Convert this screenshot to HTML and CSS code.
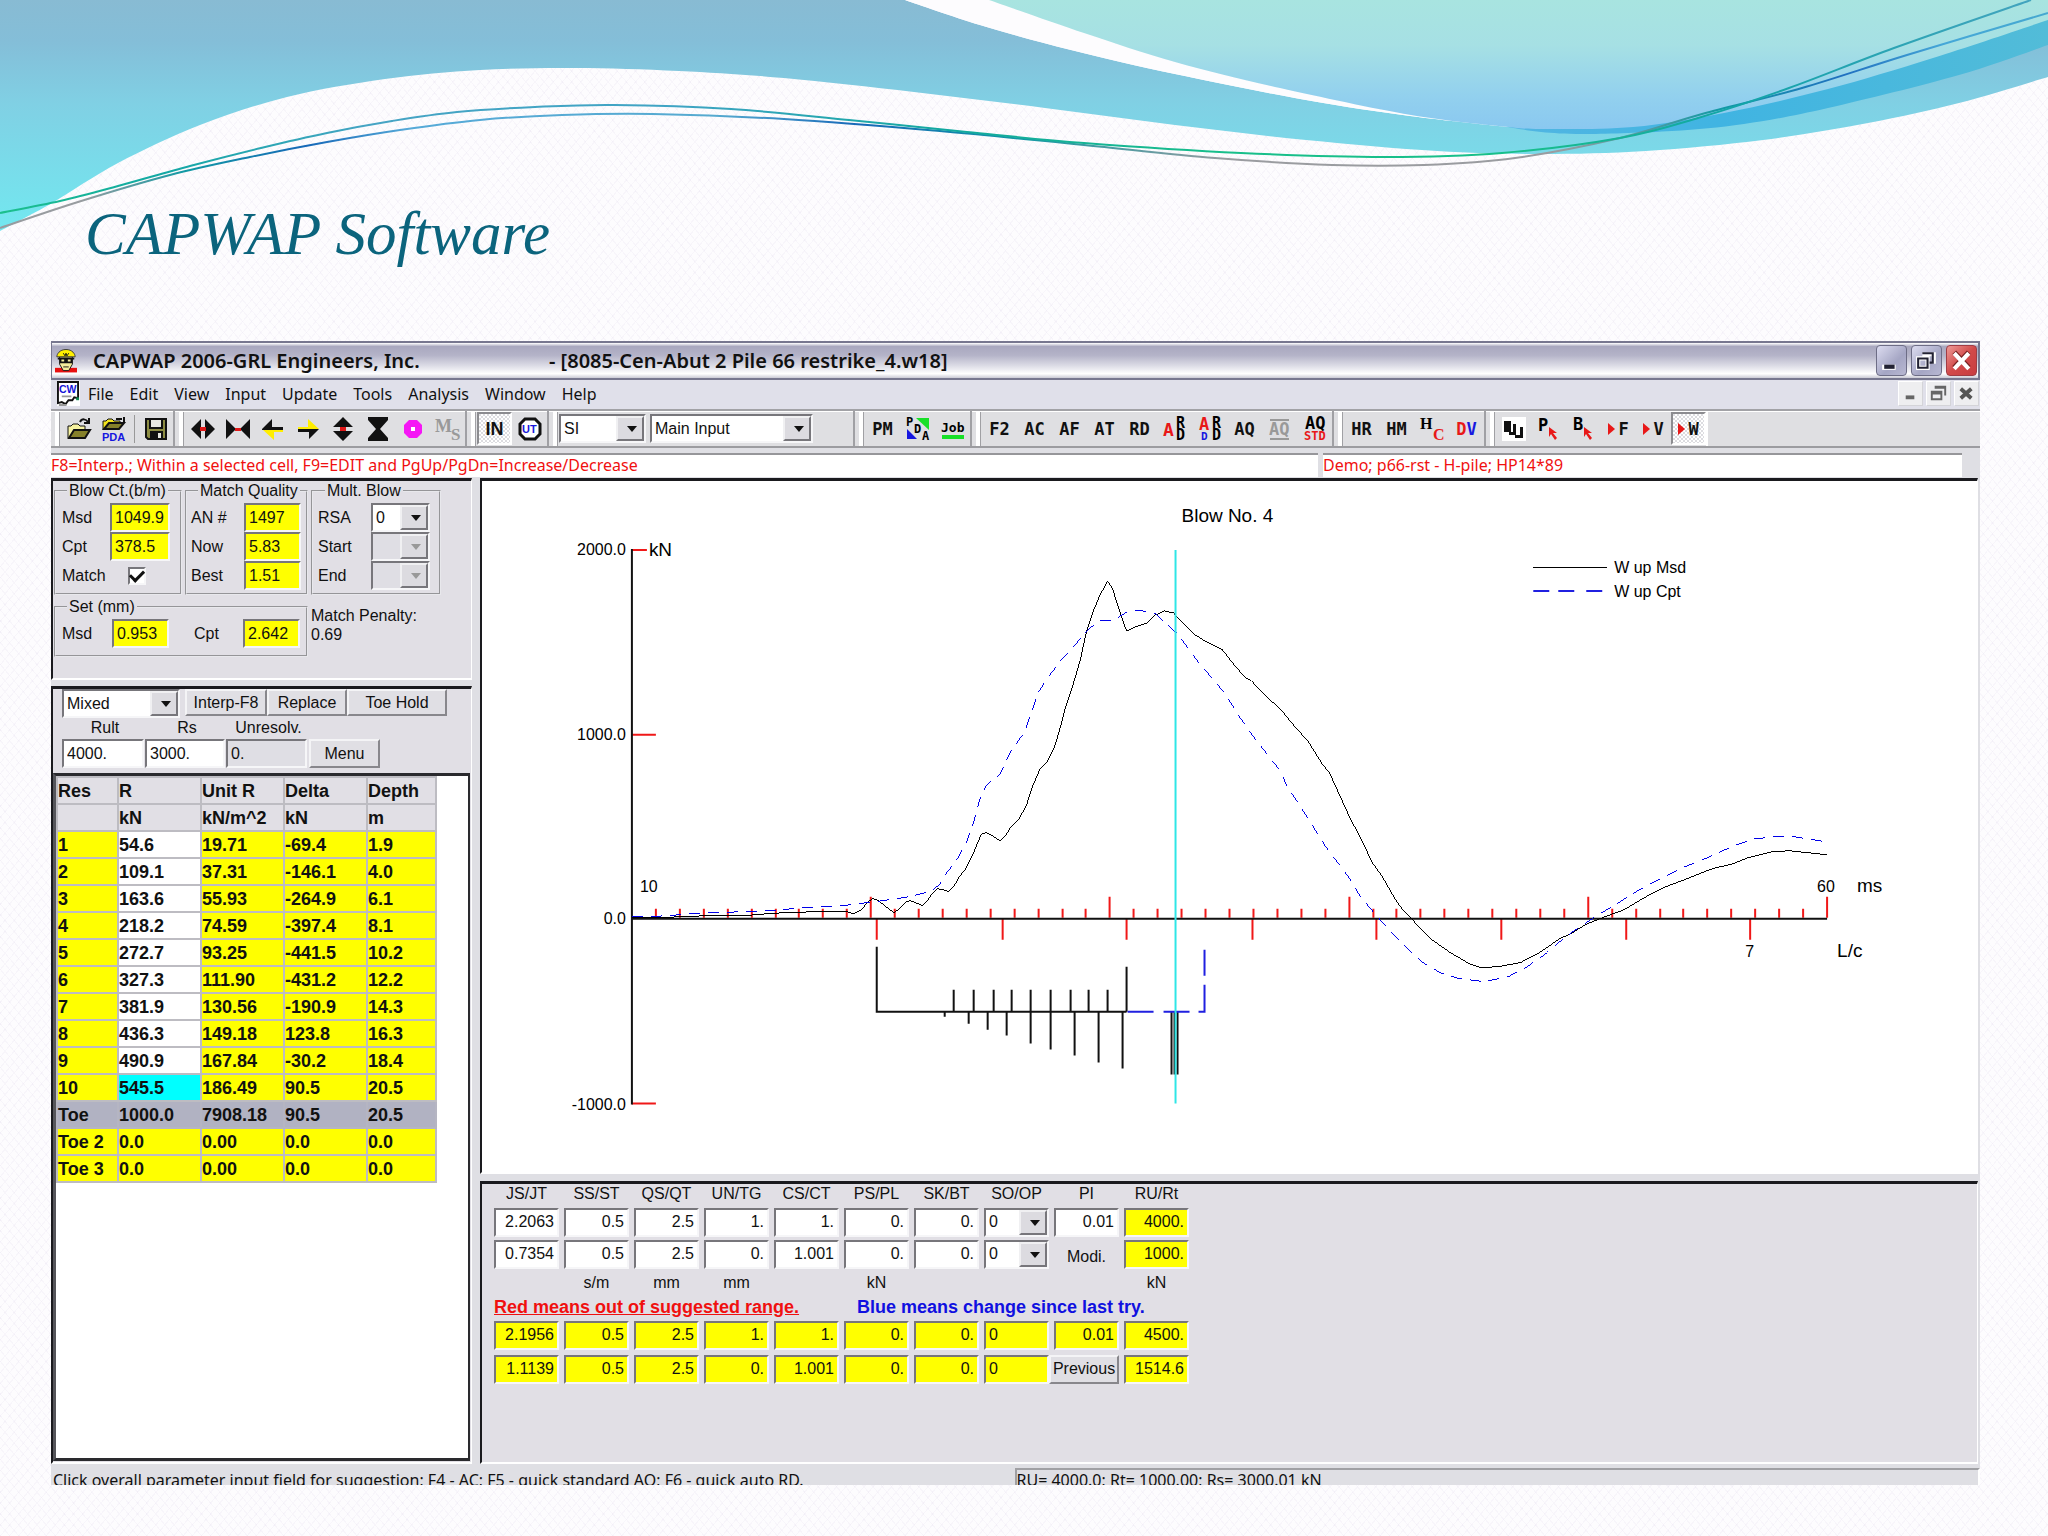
FILE: index.html
```html
<!DOCTYPE html>
<html lang="en">
<head>
<meta charset="utf-8">
<title>CAPWAP Software</title>
<link rel="stylesheet" href="styles.css">
</head>
<body>
<svg class="waves" viewBox="0 0 2048 240" preserveAspectRatio="none" aria-hidden="true">
  <defs>
    <linearGradient id="band" x1="0" y1="0" x2="0" y2="1">
      <stop offset="0" stop-color="#88bbd3"/><stop offset=".18" stop-color="#84bed8"/>
      <stop offset=".45" stop-color="#80d0e4"/><stop offset="1" stop-color="#72e8f0"/>
    </linearGradient>
    <linearGradient id="mint" x1="0" y1="0" x2="0" y2="1">
      <stop offset="0" stop-color="#a8e4e0"/><stop offset=".35" stop-color="#a6e0e4"/>
      <stop offset=".75" stop-color="#92d0ee"/><stop offset="1" stop-color="#8ac8f0"/>
    </linearGradient>
    <linearGradient id="strip" x1="0" y1="0" x2="1" y2="0">
      <stop offset="0" stop-color="#52b6e2"/><stop offset=".4" stop-color="#40b4e2"/><stop offset="1" stop-color="#52bcd8"/>
    </linearGradient>
    <linearGradient id="lineTop" gradientUnits="userSpaceOnUse" x1="0" y1="0" x2="2048" y2="0">
      <stop offset="0" stop-color="#1cc08c"/><stop offset=".08" stop-color="#12a8a4"/><stop offset=".18" stop-color="#46a4c4"/>
      <stop offset=".33" stop-color="#3fa4c4"/><stop offset=".46" stop-color="#12a8a0"/><stop offset=".6" stop-color="#18bf8a"/>
      <stop offset=".74" stop-color="#18bf8a"/><stop offset=".85" stop-color="#12a4a8"/><stop offset="1" stop-color="#46a4c0"/>
    </linearGradient>
    <linearGradient id="lineLow" gradientUnits="userSpaceOnUse" x1="0" y1="0" x2="2048" y2="0">
      <stop offset="0" stop-color="#989ca0"/><stop offset=".04" stop-color="#989ca0"/><stop offset=".09" stop-color="#129aa4"/><stop offset=".15" stop-color="#1668b8"/>
      <stop offset=".2" stop-color="#56aad8"/><stop offset=".35" stop-color="#56aad0"/><stop offset=".42" stop-color="#1668b8"/>
      <stop offset=".5" stop-color="#129aa4"/><stop offset=".6" stop-color="#9a9ca0"/><stop offset=".76" stop-color="#9a9ca0"/>
      <stop offset=".84" stop-color="#129aa4"/><stop offset=".9" stop-color="#2070c0"/><stop offset=".95" stop-color="#46a8d8"/><stop offset="1" stop-color="#46a8d0"/>
    </linearGradient>
  </defs>
  <path fill="url(#band)" data-curve="0,0 905,0|905,0 980,25 1071,50 1175,74 1306,100 1410,116 1508,127|1508,127 1700,60 2048,0|2048,0 2048,77|2048,77 1959,103 1868,123 1763,140 1646,151 1541,154 1437,151 1306,140 1175,125 1045,108 914,92 784,78 679,71 575,68 480,70 385,79 287,97 200,125 118,163 52,203 0,231"/>
  <path fill="#fdfcfe" data-curve="905,0 980,25 1071,50 1175,74 1306,100 1410,116 1508,127|1508,127 1411,115 1280,88 1175,62 1084,33 989,0"/>
  <path fill="url(#strip)" data-curve="1508,127 1541,132 1587,134 1672,131 1744,124 1828,108 1959,75 2048,45|2048,45 2048,0|2048,0 1700,60"/>
  <path fill="url(#mint)" data-curve="989,0 1084,33 1175,62 1280,88 1411,115 1508,127|1508,127 1541,129 1633,127 1724,113 1828,89 1933,58 2048,20|2048,20 2048,0"/>
  <path class="strand" stroke="url(#lineLow)" data-curve="0,228 78,202 170,175 250,157 327,142 400,130 480,120 562,115 653,114 784,119 940,131 1084,145 1215,158 1332,165 1424,165 1515,158 1620,138 1702,114 1802,88 1907,55 2048,13"/>
  <path class="strand" stroke="url(#lineTop)" data-curve="0,213 60,201 118,186 190,166 261,148 327,133 392,121 457,112 535,107 614,105 731,109 849,120 967,132 1084,143 1241,153 1385,157 1502,153 1620,138 1698,118 1789,88 1894,48 2031,0"/>
</svg>

<h1 class="slide-title">CAPWAP Software</h1>

<main class="window">
  <header class="titlebar">
    <svg class="app-icon" viewBox="0 0 24 26" aria-hidden="true">
      <path fill="#e81010" d="M0 21h24v5H0z"/>
      <path fill="#f4ec9c" stroke="#111" d="M5 9h14v8l-4 7H9l-4-7z"/>
      <path fill="#ffef00" stroke="#333" d="M2 9c0-3 3-8 10-8s10 5 10 8z"/>
      <path fill="none" stroke="#111" stroke-width="2" d="M6 11h5v4H6zM13 11h5v4h-5zM3 11h3M18 11h3"/>
      <path fill="none" stroke="#111" d="M9 20h6M9 5l2 3 1-3 1 3 2-3"/>
    </svg>
    <span class="title-name">CAPWAP 2006-GRL Engineers, Inc.</span>
    <span class="title-file">- [8085-Cen-Abut 2 Pile 66 restrike_4.w18]</span>
    <span class="win-buttons">
      <button class="xp" aria-label="Minimize"><svg viewBox="0 0 24 24"><path fill="#fff" d="M3 16h13v5H3z"/><path fill="#223" d="M5 16h10v4H5z"/></svg></button>
      <button class="xp" aria-label="Restore"><svg viewBox="0 0 24 24"><path fill="none" stroke="#fff" stroke-width="4" d="M4 10h9v9H4zM8 6h11v9"/><path fill="none" stroke="#223" stroke-width="2" d="M4 10h9v9H4zM8 5h10v9h-3"/></svg></button>
      <button class="xp xp-close" aria-label="Close"><svg viewBox="0 0 24 24"><path stroke="#722" stroke-width="5" d="M5 4l14 15M19 4L5 19"/><path stroke="#fff" stroke-width="4" d="M5 5l14 15M19 5L5 20"/></svg></button>
    </span>
  </header>

  <nav class="menubar" aria-label="Main menu">
    <svg class="doc-icon" viewBox="0 0 24 26" aria-hidden="true">
      <path fill="#fff" d="M0 0h24v26H0z"/>
      <path fill="#fff" stroke="#111" stroke-width="2" d="M1 1h21v17l-4-1-2 3-4 0-3 4-4-2-4 1z"/>
      <text x="2" y="12" class="ic-text" font-size="11" fill="#1212d8">CW</text>
      <path stroke="#999" stroke-width="2" d="M5 16h10M2 25h8"/><path fill="#0a8a50" d="M20 17h3v3h-3z"/>
    </svg>
    <a href="#">File</a><a href="#">Edit</a><a href="#">View</a><a href="#">Input</a><a href="#">Update</a><a href="#">Tools</a><a href="#">Analysis</a><a href="#">Window</a><a href="#">Help</a>
    <span class="mdi-buttons">
      <button aria-label="Minimize document"><svg viewBox="0 0 24 24"><path fill="#666" d="M7 14h9v4H7z"/></svg></button>
      <button aria-label="Restore document"><svg viewBox="0 0 24 24"><path fill="none" stroke="#666" stroke-width="2" d="M5 10h10v8H5zM5 12h10M8 5h11v9M8 6h10"/></svg></button>
      <button aria-label="Close document"><svg viewBox="0 0 24 24"><path stroke="#555" stroke-width="4" d="M6 7l11 10M17 7L6 17"/></svg></button>
    </span>
  </nav>

  <div class="toolbar" role="toolbar" aria-label="Tools">
    <div class="group">
      <button aria-label="Open"><svg viewBox="0 0 24 24"><path fill="#f6f2a0" stroke="#111" d="M1 21V9h3l2-2h5l2 2h5v4"/><path fill="#85802a" stroke="#111" stroke-width="2" d="M2 21l5-8h16l-5 8z"/><path fill="none" stroke="#111" stroke-width="2" d="M13 5c2-4 6-3 8 0M22 1v5h-5"/></svg></button>
      <button aria-label="Open PDA"><svg viewBox="0 0 24 24"><path fill="#f2e41c" stroke="#111" d="M1 12V4h3l2-2h4l2 2h6v3"/><path fill="#85802a" stroke="#111" stroke-width="2" d="M2 12l5-6h15l-5 6z"/><path fill="none" stroke="#111" stroke-width="2" d="M14 2h6M22 0v5"/><text x="0" y="24" class="ic-text" font-size="11" fill="#1616e0">PDA</text></svg></button>
      <i class="divider"></i>
      <button aria-label="Save"><svg viewBox="0 0 24 24"><path fill="#8c8c42" stroke="#111" stroke-width="2" d="M2 2h20v20H4l-2-2z"/><path fill="#e6e6e0" stroke="#111" stroke-width="2" d="M6 2h12v9H6z"/><path fill="#111" d="M6 14h13v8H6z"/><path fill="#e6e6e0" d="M14 16h3v5h-3z"/></svg></button>
    </div>
    <div class="group">
      <button aria-label="Widen"><svg viewBox="0 0 24 24"><path fill="#111" d="M0 12L10 2v20zM24 12L14 2v20z"/><path fill="#e01818" d="M9 10h6v4H9z"/></svg></button>
      <button aria-label="Narrow"><svg viewBox="0 0 24 24"><path fill="#111" d="M0 2l10 10L0 22zM24 2L14 12l10 10z"/><path fill="#e01818" d="M9 11h6v3H9z"/></svg></button>
      <button aria-label="Left"><svg viewBox="0 0 24 24"><path fill="#ffee00" d="M1 12h21v3H13v8z"/><path fill="#111" d="M1 12L11 2v8h11v3H1z"/></svg></button>
      <button aria-label="Right"><svg viewBox="0 0 24 24"><path fill="#ffee00" d="M2 10h10V2l11 10H2z"/><path fill="#111" d="M2 12h21L13 22v-7H2z"/></svg></button>
      <button aria-label="Taller"><svg viewBox="0 0 24 24"><path fill="#111" d="M12 0l10 10H2zM12 24l10-10H2z"/><path fill="#e01818" d="M9 10h6v4H9z"/></svg></button>
      <button aria-label="Shorter"><svg viewBox="0 0 24 24"><path fill="#111" d="M2 0h20v3l-8 9 8 9v3H2v-3l8-9-8-9z"/></svg></button>
      <button aria-label="Center"><svg viewBox="0 0 24 24"><path fill="#f516f5" d="M8 3h8l5 5v8l-5 5H8l-5-5V8z"/><path fill="#fff" d="M10 10h4v4h-4z"/></svg></button>
      <button aria-label="Manual scale" disabled><svg viewBox="0 0 24 24"><g class="ic-serif" fill="#999"><text x="-1" y="15" font-size="18">M</text><text x="15" y="23" font-size="17">S</text></g></svg></button>
    </div>
    <div class="group">
      <button class="pressed in">IN</button>
      <button aria-label="Output"><svg viewBox="0 0 24 24"><path fill="#fff" stroke="#111" stroke-width="3" d="M7 2h10l5 5v10l-5 5H7l-5-5V7z"/><text x="4" y="16" class="ic-text" font-size="11" fill="#1818dc">UT</text></svg></button>
    </div>
    <div class="group group-combos">
      <span class="combo units"><select aria-label="Units"><option>SI</option></select></span>
      <span class="combo pages"><select aria-label="Input page"><option>Main Input</option></select></span>
    </div>
    <div class="group">
      <button>PM</button>
      <button aria-label="PDA view"><svg viewBox="0 0 24 24"><path fill="#18e028" d="M10 1h13v12z"/><path fill="#1616e0" d="M1 12v10h10z"/><g class="ic-thin" font-size="12"><text x="0" y="9">P</text><text x="8" y="16">D</text><text x="16" y="23">A</text></g></svg></button>
      <button aria-label="Job"><svg viewBox="0 0 24 24"><text x="0" y="15" class="ic-mono" font-size="13">Job</text><path fill="#18e028" d="M1 18h22v4H1z"/></svg></button>
    </div>
    <div class="group">
      <button>F2</button><button>AC</button><button>AF</button><button>AT</button><button>RD</button>
      <button aria-label="ARD"><svg viewBox="0 0 24 24"><text x="0" y="19" class="ic-mono" font-size="18" fill="#e81818">A</text><text x="13" y="11" class="ic-mono" font-size="15">R</text><text x="13" y="23" class="ic-mono" font-size="15">D</text></svg></button>
      <button aria-label="Ab RD"><svg viewBox="0 0 24 24"><text x="1" y="13" class="ic-mono" font-size="17" fill="#e81818">A</text><text x="3" y="23" class="ic-mono" font-size="11" fill="#1818e0">D</text><text x="14" y="11" class="ic-mono" font-size="15">R</text><text x="14" y="23" class="ic-mono" font-size="15">D</text></svg></button>
      <button>AQ</button>
      <button aria-label="AQ average" disabled><svg viewBox="0 0 24 24"><text x="1" y="18" class="ic-mono" font-size="17" fill="#999">AQ</text><path stroke="#999" stroke-width="2" d="M2 3h19M2 22h19"/></svg></button>
      <button aria-label="AQ standard"><svg viewBox="0 0 24 24"><text x="2" y="12" class="ic-mono" font-size="17">AQ</text><text x="1" y="23" class="ic-mono" font-size="12" fill="#e81818">STD</text></svg></button>
    </div>
    <div class="group">
      <button>HR</button><button>HM</button>
      <button aria-label="HC"><svg viewBox="0 0 24 24"><g class="ic-serif"><text x="0" y="12" font-size="16">H</text><text x="13" y="23" font-size="16" fill="#e81818">C</text></g></svg></button>
      <button><span class="red">D</span><span class="blue">V</span></button>
    </div>
    <div class="group last">
      <button aria-label="Layout"><svg viewBox="0 0 24 24"><path fill="#fff" d="M0 0h24v24H0z"/><path fill="#111" d="M2 4h7v11H2zM11 7h3v11H7v-3h4zM18 10h3v11h-8v-3h5z"/></svg></button>
      <button aria-label="P pick"><svg viewBox="0 0 24 24"><text x="1" y="14" class="ic-mono" font-size="17">P</text><path fill="#e81818" d="M12 10l8 6h-4l4 5-2 2-4-6-2 3z"/></svg></button>
      <button aria-label="B pick"><svg viewBox="0 0 24 24"><text x="1" y="13" class="ic-mono" font-size="17">B</text><path fill="#e81818" d="M12 10l8 6h-4l4 5-2 2-4-6-2 3z"/></svg></button>
      <button><i class="play"></i>F</button>
      <button><i class="play"></i>V</button>
      <button class="pressed"><i class="play"></i>W</button>
    </div>
  </div>

  <div class="hints">
    <p>F8=Interp.; Within a selected cell, F9=EDIT and PgUp/PgDn=Increase/Decrease</p>
    <p>Demo; p66-rst - H-pile; HP14*89</p>
  </div>

  <div class="workspace">
    <div class="side">
      <section class="pane summary">
        <fieldset class="blow">
          <legend>Blow Ct.(b/m)</legend>
          <label for="bm">Msd</label><input id="bm" class="calc" value="1049.9">
          <label for="bc">Cpt</label><input id="bc" class="calc" value="378.5">
          <label for="bx">Match</label><input id="bx" type="checkbox" checked>
        </fieldset>
        <fieldset class="quality">
          <legend>Match Quality</legend>
          <label for="qa">AN #</label><input id="qa" class="calc" value="1497">
          <label for="qn">Now</label><input id="qn" class="calc" value="5.83">
          <label for="qb">Best</label><input id="qb" class="calc" value="1.51">
        </fieldset>
        <fieldset class="mult">
          <legend>Mult. Blow</legend>
          <label for="mr">RSA</label><span class="combo"><select id="mr"><option>0</option></select></span>
          <label for="ms">Start</label><span class="combo off"><select id="ms" disabled></select></span>
          <label for="me">End</label><span class="combo off"><select id="me" disabled></select></span>
        </fieldset>
        <fieldset class="set">
          <legend>Set (mm)</legend>
          <label for="sm">Msd</label><input id="sm" class="calc" value="0.953">
          <label for="sc">Cpt</label><input id="sc" class="calc" value="2.642">
        </fieldset>
        <p class="penalty">Match Penalty:<br>0.69</p>
      </section>

      <section class="pane resistance">
        <div class="actions">
          <span class="combo"><select aria-label="Distribution"><option>Mixed</option></select></span>
          <button class="raised interp">Interp-F8</button><button class="raised replace">Replace</button><button class="raised toe">Toe Hold</button>
        </div>
        <div class="totals">
          <label for="ru">Rult</label><label for="rs">Rs</label><label for="un">Unresolv.</label><span></span>
          <input id="ru" value="4000."><input id="rs" value="3000."><input id="un" class="gray" value="0."><button class="raised">Menu</button>
        </div>
        <div class="table-box">
          <table>
            <colgroup><col class="c1"><col class="c2"><col class="c2"><col class="c2"><col class="c3"></colgroup>
            <thead>
              <tr><th>Res</th><th>R</th><th>Unit R</th><th>Delta</th><th>Depth</th></tr>
              <tr><th></th><th>kN</th><th>kN/m^2</th><th>kN</th><th>m</th></tr>
            </thead>
            <tbody>
              <tr><td>1</td><td class="edit">54.6</td><td>19.71</td><td>-69.4</td><td>1.9</td></tr>
              <tr><td>2</td><td class="edit">109.1</td><td>37.31</td><td>-146.1</td><td>4.0</td></tr>
              <tr><td>3</td><td class="edit">163.6</td><td>55.93</td><td>-264.9</td><td>6.1</td></tr>
              <tr><td>4</td><td class="edit">218.2</td><td>74.59</td><td>-397.4</td><td>8.1</td></tr>
              <tr><td>5</td><td class="edit">272.7</td><td>93.25</td><td>-441.5</td><td>10.2</td></tr>
              <tr><td>6</td><td class="edit">327.3</td><td>111.90</td><td>-431.2</td><td>12.2</td></tr>
              <tr><td>7</td><td class="edit">381.9</td><td>130.56</td><td>-190.9</td><td>14.3</td></tr>
              <tr><td>8</td><td class="edit">436.3</td><td>149.18</td><td>123.8</td><td>16.3</td></tr>
              <tr><td>9</td><td class="edit">490.9</td><td>167.84</td><td>-30.2</td><td>18.4</td></tr>
              <tr><td>10</td><td class="active">545.5</td><td>186.49</td><td>90.5</td><td>20.5</td></tr>
              <tr class="toe-row"><td>Toe</td><td>1000.0</td><td>7908.18</td><td>90.5</td><td>20.5</td></tr>
              <tr><td>Toe 2</td><td>0.0</td><td>0.00</td><td>0.0</td><td>0.0</td></tr>
              <tr><td>Toe 3</td><td>0.0</td><td>0.00</td><td>0.0</td><td>0.0</td></tr>
            </tbody>
          </table>
        </div>
      </section>
    </div>

    <div class="content">
      <section class="pane chart">
        <svg viewBox="482 481 1496 691" role="img" aria-label="Wave up, measured and computed">
          <g class="ticks">
            <path d="M632 550h15M632 735h24M632 1104h24"/>
            <path id="ms-ticks"/>
            <path d="M877 919v21M1003 919v21M1127 919v21M1253 919v21M1377 919v21M1502 919v21M1627 919v21M1751 919v21"/>
          </g>
          <path class="axis" d="M632 549V1105M632 919H1828"/>
          <polyline class="msd" points="632,918 692,917 702,916 749,916 753,915 784,913 815,912 847,912 854,914 862,910 868,902 873,899 879,901 885,906 894,913 900,909 905,903 910,901 916,903 923,906 927,902 933,893 938,889 943,890 949,892 954,887 959,878 966,869 973,855 978,843 982,834 987,833 993,836 1000,841 1006,836 1012,826 1019,820 1027,805 1032,789 1037,777 1041,768 1047,763 1055,747 1060,730 1066,707 1074,683 1081,659 1086,635 1093,613 1100,596 1108,581 1113,589 1119,608 1124,623 1127,631 1136,627 1148,623 1156,615 1165,611 1174,613 1183,623 1194,634 1207,642 1223,650 1233,663 1246,678 1252,681 1267,697 1281,709 1293,724 1309,742 1322,763 1330,773 1340,795 1350,817 1361,838 1373,863 1383,877 1392,893 1400,906 1412,919 1431,939 1451,953 1470,964 1481,968 1499,967 1521,963 1540,953 1562,938 1570,935 1586,925 1603,918 1625,910 1645,898 1664,888 1693,877 1713,869 1734,864 1749,858 1773,852 1790,851 1809,853 1828,855"/>
          <polyline class="cpt" points="632,917 673,916 683,914 716,913 768,911 805,908 843,906 867,903 890,900 909,897 930,892 940,885 947,873 956,862 967,842 974,822 980,800 987,785 1000,775 1011,752 1025,732 1039,692 1048,678 1061,661 1074,647 1085,633 1099,621 1113,621 1129,611 1143,611 1156,614 1166,623 1178,634 1197,660 1225,693 1240,717 1254,737 1280,770 1288,787 1305,813 1325,845 1349,877 1361,897 1378,917 1402,943 1422,962 1441,973 1460,979 1485,982 1509,977 1528,967 1548,952 1572,933 1596,917 1616,905 1635,893 1659,880 1683,868 1708,858 1737,845 1756,839 1776,837 1795,837 1827,842"/>
          <path class="pile" d="M877 947V1012H1127M1127 967V1012M954 990v22M974 990v22M994 990v22M1012 990v22M1031 990v22M1051 990v22M1071 990v22M1089 990v22M1108 990v22M945 1012v5M969 1012v12M988 1012v18M1007 1012v24M1031 1012v32M1051 1012v38M1075 1012v44M1099 1012v51M1123 1012v57M1172 1012v63M1175 1012v63M1178 1012v63"/>
          <path class="ghost" d="M1128 1012h26M1164 1012h26M1199 1012h6V985M1205 976V950"/>
          <path class="cursor" d="M1176 550V1104"/>
          <path class="msd" d="M1534 568h74"/>
          <path class="ghost" d="M1534 591h16M1559 591h16M1587 591h16"/>
          <g class="small">
            <text x="1615" y="573">W up Msd</text><text x="1615" y="597">W up Cpt</text>
            <text x="626" y="555" text-anchor="end">2000.0</text><text x="626" y="740" text-anchor="end">1000.0</text>
            <text x="626" y="924" text-anchor="end">0.0</text><text x="626" y="1110" text-anchor="end">-1000.0</text>
            <text x="640" y="892">10</text><text x="1818" y="892">60</text><text x="1746" y="957">7</text>
          </g>
          <g class="large">
            <text x="649" y="556">kN</text><text x="1182" y="522">Blow No. 4</text><text x="1858" y="892">ms</text><text x="1838" y="957">L/c</text>
          </g>
        </svg>
      </section>

      <section class="pane params">
        <div class="grid">
          <span>JS/JT</span><span>SS/ST</span><span>QS/QT</span><span>UN/TG</span><span>CS/CT</span><span>PS/PL</span><span>SK/BT</span><span>SO/OP</span><span>PI</span><span>RU/Rt</span>
          <input aria-label="JS" value="2.2063"><input aria-label="SS" value="0.5"><input aria-label="QS" value="2.5"><input aria-label="UN" value="1."><input aria-label="CS" value="1."><input aria-label="PS" value="0."><input aria-label="SK" value="0."><span class="combo"><select aria-label="SO"><option>0</option></select></span><input aria-label="PI" value="0.01"><input aria-label="RU" class="calc" value="4000.">
          <input aria-label="JT" value="0.7354"><input aria-label="ST" value="0.5"><input aria-label="QT" value="2.5"><input aria-label="TG" value="0."><input aria-label="CT" value="1.001"><input aria-label="PL" value="0."><input aria-label="BT" value="0."><span class="combo"><select aria-label="OP"><option>0</option></select></span><span class="modi">Modi.</span><input aria-label="Rt" class="calc" value="1000.">
          <span></span><span>s/m</span><span>mm</span><span>mm</span><span></span><span>kN</span><span></span><span></span><span></span><span>kN</span>
          <strong class="red-note">Red means out of suggested range.</strong><strong class="blue-note">Blue means change since last try.</strong>
          <input aria-label="Previous JS" class="calc" value="2.1956"><input aria-label="Previous SS" class="calc" value="0.5"><input aria-label="Previous QS" class="calc" value="2.5"><input aria-label="Previous UN" class="calc" value="1."><input aria-label="Previous CS" class="calc" value="1."><input aria-label="Previous PS" class="calc" value="0."><input aria-label="Previous SK" class="calc" value="0."><input aria-label="Previous SO" class="calc left" value="0"><input aria-label="Previous PI" class="calc" value="0.01"><input aria-label="Previous RU" class="calc" value="4500.">
          <input aria-label="Previous JT" class="calc" value="1.1139"><input aria-label="Previous ST" class="calc" value="0.5"><input aria-label="Previous QT" class="calc" value="2.5"><input aria-label="Previous TG" class="calc" value="0."><input aria-label="Previous CT" class="calc" value="1.001"><input aria-label="Previous PL" class="calc" value="0."><input aria-label="Previous BT" class="calc" value="0."><input aria-label="Previous OP" class="calc left" value="0"><button class="raised previous">Previous</button><input aria-label="Previous Rt" class="calc" value="1514.6">
        </div>
      </section>
    </div>
  </div>

  <footer class="status">
    <span>Click overall parameter input field for suggestion; F4 - AC; F5 - quick standard AQ; F6 - quick auto RD.</span>
    <span>RU= 4000.0; Rt= 1000.00; Rs= 3000.01 kN</span>
  </footer>
</main>
<script src="script.js"></script>
</body>
</html>
```
FILE: styles.css
```css
* { box-sizing: border-box; }
html { height: 100%; }
body {
  margin: 0;
  min-height: 100%;
  display: flex;
  flex-direction: column;
  padding: 0 68px 51px 51px;
  position: relative;
  color: #111;
  font: 16px/20px "Liberation Sans", Arial, sans-serif;
  background:
    repeating-linear-gradient(50deg, rgba(215, 205, 230, .14) 0 1px, transparent 1px 7px),
    repeating-linear-gradient(130deg, rgba(215, 205, 230, .14) 0 1px, transparent 1px 7px),
    #fdfcfe;
}
p { margin: 0; }
button, input, select { font: inherit; color: inherit; margin: 0; border-radius: 0; }
svg { display: block; overflow: visible; }

.waves { position: absolute; top: 0; left: 0; width: 100%; height: 240px; overflow: hidden; }
.strand { fill: none; stroke-width: 2; }

.slide-title {
  position: relative;
  margin: 0;
  padding: 198px 0 0 34px;
  height: 341px;
  font: italic 61px/72px "Liberation Serif", serif;
  color: #0b647d;
}

/* window frame */
.window {
  flex: 1;
  display: flex;
  flex-direction: column;
  background: #dfdfe4;
}
.titlebar {
  display: flex;
  align-items: center;
  height: 39px;
  padding: 0 1px 0 3px;
  border: 2px solid #77778f;
  border-left-width: 1px;
  background: linear-gradient(#fff 0, #a9a8bf 10%, #b4b3c8 35%, #dcdce6 65%, #fff 88%, #c9c9d4 100%);
  font: 600 20px/24px "Noto Sans", "Trebuchet MS", sans-serif;
  white-space: pre;
}
.app-icon { width: 22px; height: 25px; }
.title-name { margin-left: 16px; width: 456px; }
.title-file { flex: 1; }
.win-buttons { display: flex; gap: 4px; }
.xp {
  width: 31px;
  height: 31px;
  padding: 2px;
  border: 1px solid #6d6d86;
  border-radius: 4px;
  background: linear-gradient(135deg, #dcdcf0, #a5a6c4 60%, #b8b8d2);
}
.xp-close { border-color: #a03c44; background: linear-gradient(135deg, #ee9a96, #d24a4a 50%, #c83c40); }

.menubar {
  display: flex;
  align-items: center;
  gap: 16px;
  height: 29px;
  padding: 0 1px 2px 6px;
  background: #e0e0ea;
  font: 16px/20px "Noto Sans", Tahoma, sans-serif;
}
.menubar a { color: inherit; text-decoration: none; }
.doc-icon { width: 23px; height: 25px; margin-right: -8px; }
.mdi-buttons { display: flex; gap: 3px; margin-left: auto; }
.mdi-buttons button { width: 25px; height: 25px; padding: 0; border: 1px solid #fff; border-right-color: #d4d4d8; border-bottom-color: #d4d4d8; background: #eeeef0; }

.ic-text { font-family: "Liberation Sans", sans-serif; font-weight: bold; }
.ic-serif { font-family: "Liberation Serif", serif; font-weight: bold; }
.ic-mono { font-family: "DejaVu Sans Mono", monospace; font-weight: bold; }
.ic-thin { font-family: "DejaVu Sans Mono", monospace; }

.toolbar {
  display: flex;
  height: 39px;
  border-top: 2px solid #a2a2a6;
  border-bottom: 2px solid #9c9ca0;
  background: #dfdfe2;
  box-shadow: inset 0 1px #fff;
}
.group {
  display: flex;
  align-items: center;
  padding-left: 4px;
  border-right: 2px solid #a0a0a4;
}
.group::before {
  content: "";
  align-self: stretch;
  width: 4px;
  margin-top: 1px;
  border-right: 1px solid #a0a0a4;
  background: #fff;
}
.group > :first-child { margin-left: 1px; }
.group button {
  width: 35px;
  height: 33px;
  padding: 0;
  border: 0;
  display: flex;
  align-items: center;
  justify-content: center;
  background: none;
  font: bold 17px/24px "DejaVu Sans Mono", monospace;
}
.group button svg { width: 24px; height: 24px; flex: none; }
.group .pressed {
  border: 2px solid #8c8c90;
  border-right-color: #fff;
  border-bottom-color: #fff;
  background: repeating-conic-gradient(#fff 0 25%, #dcdce0 0 50%) 0 0 / 4px 4px;
}
.group .in { font-family: "Liberation Sans", sans-serif; font-size: 18px; }
.divider { width: 1px; height: 28px; margin: 0 3px; background: #999; }
.group-combos { width: 306px; }
.units { width: 87px; margin-right: 4px; }
.pages { width: 163px; }
.last { border-right-color: #fff; }
.red { color: #e81818; }
.blue { color: #1818e0; }
.play { border-left: 7px solid #e81818; border-top: 6px solid transparent; border-bottom: 6px solid transparent; margin-right: 3px; }

/* combo boxes and fields */
input, .combo {
  height: 29px;
  min-width: 0;
  border: 2px solid #77767b;
  border-right-color: #f6f6f8;
  border-bottom-color: #f6f6f8;
  background: #fff;
}
input { padding: 0 3px; }
.combo { position: relative; display: block; }
.combo select {
  width: 100%;
  height: 100%;
  padding: 0 3px;
  border: 0;
  appearance: none;
  background: none;
  opacity: 1;
}
.combo::before {
  content: "";
  position: absolute;
  top: 0;
  right: 0;
  bottom: 0;
  width: 24px;
  border: 2px solid #f0f0f2;
  border-right-color: #77767b;
  border-bottom-color: #77767b;
  background: #dcdbe0;
  pointer-events: none;
}
.combo::after {
  content: "";
  position: absolute;
  top: 10px;
  right: 7px;
  border: 5px solid transparent;
  border-top: 6px solid #111;
  border-bottom: 0;
  pointer-events: none;
}
.combo.off { background: #dfdee4; }
.combo.off::after { border-top-color: #999; }
.calc { background: #ff0; }
.gray { background: #dfdee4; }
.raised {
  padding: 0;
  border: 2px solid #f4f4f6;
  border-right-color: #88878c;
  border-bottom-color: #88878c;
  background: #e0dfe4;
  white-space: nowrap;
}

.hints {
  display: flex;
  gap: 5px;
  padding: 5px 18px 1px 0;
  height: 30px;
  color: #f01010;
  font: 16px/21px "Noto Sans", Tahoma, sans-serif;
}
.hints p { border-top: 2px solid #96969a; background: #fff; flex: 639; white-space: nowrap; }
.hints p:first-child { flex: 1267; }

/* panes */
.workspace { flex: 1; display: flex; gap: 8px; padding-right: 2px; }
.side { width: 421px; flex: none; display: flex; flex-direction: column; gap: 6px; }
.content { flex: 1; min-width: 0; display: flex; flex-direction: column; gap: 7px; }
.pane {
  border: 2px solid #1a1a1e;
  border-top-width: 3px;
  border-right: 1px solid #fff;
  border-bottom: 2px solid #fff;
  background: #e1dfe5;
}
.summary {
  display: grid;
  grid-template-columns: 128px 123px 130px;
  grid-template-rows: 114px 60px;
  column-gap: 3px;
  row-gap: 2px;
  height: 202px;
  padding-left: 1px;
}
fieldset {
  display: grid;
  grid-auto-rows: 29px;
  align-items: center;
  margin: 0;
  padding: 2px 4px 0 6px;
  border: 2px groove #e8e8ec;
  min-width: 0;
}
legend { margin-left: 5px; padding: 0 2px; }
.blow { grid-template-columns: 48px 60px; }
.quality { grid-template-columns: 53px 57px; padding-left: 4px; }
.mult { grid-template-columns: 53px 59px; padding-left: 5px; }
.blow label, .quality label, .mult label { white-space: nowrap; }
.mult legend, .quality legend { margin-left: 7px; }
.set { grid-column: 1 / 3; grid-template-columns: 50px 57px 25px 49px 57px; }
.set label:nth-of-type(2) { grid-column: 4; }
.penalty { line-height: 19px; padding-top: 9px; white-space: nowrap; }
input[type="checkbox"] {
  appearance: none;
  width: 18px;
  height: 18px;
  margin-left: 18px;
  padding: 0;
  display: grid;
  place-items: center;
}
input[type="checkbox"]:checked::before { content: ""; width: 11px; height: 6px; border: 3px solid #111; border-width: 0 0 3px 3px; transform: translateY(-1px) rotate(-45deg); }

.resistance { flex: 1; display: flex; flex-direction: column; }
.actions { display: flex; padding-left: 9px; }
.actions .combo { width: 118px; margin-right: 5px; }
.actions .raised { height: 27px; }
.interp { width: 82px; }
.replace { width: 80px; }
.toe { width: 100px; }
.totals {
  display: grid;
  grid-template-columns: 82px 80px 81px 72px;
  grid-template-rows: 21px 29px;
  column-gap: 1px;
  padding-left: 9px;
}
.totals label { padding-left: 4px; text-align: center; }
.totals .raised { margin-left: 1px; }
.table-box { flex: 1; margin: 5px 1px 1px 0; border: 3px solid #2a2a2e; border-left-color: #55555a; border-right-width: 2px; background: #fff; }
table { border-collapse: collapse; table-layout: fixed; width: 379px; font: bold 18px/24px "Liberation Sans", Arial, sans-serif; }
.c1 { width: 61px; }
.c2 { width: 83px; }
.c3 { width: 69px; }
th, td { height: 27px; padding: 0; border: 2px solid #bdbcc2; text-align: left; white-space: nowrap; line-height: 24px; }
th { background: #e1dfe5; }
td { background: #ff0; }
.edit { background: #fff; }
.active { background: #0ff; }
.toe-row td { background: #b1b2c2; border-color: #b5b5c2; }

.chart { background: #fff; }
.chart svg { width: 100%; height: auto; }
.chart path, .chart polyline { fill: none; stroke-width: 2; }
.ticks { stroke: #f01818; }
.axis, .pile { stroke: #111; }
.chart .msd { stroke: #000; stroke-width: 1; shape-rendering: crispEdges; }
.chart .cpt { stroke: #0000e8; stroke-width: 1; stroke-dasharray: 11 8; shape-rendering: crispEdges; }
.ghost { stroke: #2020e0; }
.cursor { stroke: #2fe6e6; }
.small { font-size: 16px; }
.large { font-size: 19px; }

.params { flex: 1; padding: 0 0 0 12px; }
.grid {
  display: grid;
  grid-template-columns: repeat(10, 65px);
  grid-template-rows: 24px 32px 33px 24px 24px 34px 32px;
  column-gap: 5px;
  text-align: center;
}
.grid input { text-align: right; }
.grid .left { text-align: left; }
.grid .combo { text-align: left; }
.modi { padding-top: 7px; }
.grid > span { white-space: nowrap; }
.red-note, .blue-note { grid-column: span 5; text-align: left; font-size: 18px; white-space: nowrap; }
.red-note { color: #f01010; text-decoration: underline; }
.blue-note { color: #1010e0; padding-left: 13px; }
.previous { height: 29px; margin-left: -5px; }

.status {
  display: flex;
  height: 21px;
  overflow: hidden;
  padding: 4px 0 0 2px;
  font: 16px/24px "Noto Sans", Tahoma, sans-serif;
}
.status span { flex: 964; white-space: nowrap; }
.status span:last-child { border: 2px solid #a0a0a4; border-right-color: #fff; border-bottom: 0; line-height: 20px; }
```
FILE: script.js
```js
// Build a smooth path through each "x,y x,y ..." run; runs are joined by "|".
function smoothRun(points, first) {
  let d = (first ? 'M' : 'L') + points[0].join(' ');
  for (let i = 0; i < points.length - 1; i++) {
    const a = points[i - 1] || points[i];
    const b = points[i];
    const c = points[i + 1];
    const e = points[i + 2] || c;
    d += `C${b[0] + (c[0] - a[0]) / 6} ${b[1] + (c[1] - a[1]) / 6} ${c[0] - (e[0] - b[0]) / 6} ${c[1] - (e[1] - b[1]) / 6} ${c[0]} ${c[1]}`;
  }
  return d;
}
document.querySelectorAll('[data-curve]').forEach((path) => {
  const runs = path.dataset.curve.split('|').map((run) => run.trim().split(/\s+/).map((p) => p.split(',').map(Number)));
  path.setAttribute('d', runs.map((run, i) => smoothRun(run, i === 0)).join(''));
});

// One tick per millisecond from 10 to 60, taller every ten.
let ticks = '';
for (let ms = 1; ms <= 50; ms++) {
  ticks += `M${Math.round(632 + ms * 23.92)} 918v${ms % 10 === 0 ? -21 : -9}`;
}
document.getElementById('ms-ticks').setAttribute('d', ticks);
```
